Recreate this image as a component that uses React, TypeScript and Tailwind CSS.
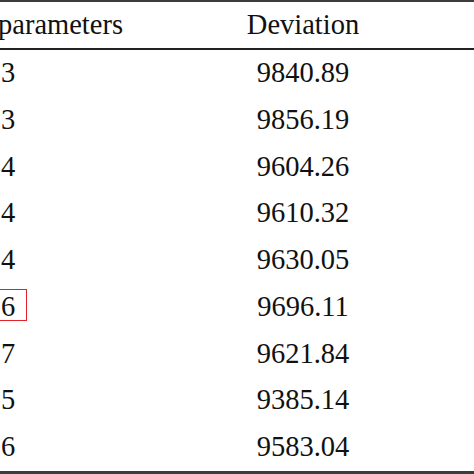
const rows = [
  { params: '3', deviation: '9840.89' },
  { params: '3', deviation: '9856.19' },
  { params: '4', deviation: '9604.26' },
  { params: '4', deviation: '9610.32' },
  { params: '4', deviation: '9630.05' },
  { params: '6', deviation: '9696.11', marked: true },
  { params: '7', deviation: '9621.84' },
  { params: '5', deviation: '9385.14' },
  { params: '6', deviation: '9583.04' },
];

export default function App() {
  return (
    <div
      className="w-[474px] h-[474px] bg-white text-[#111] overflow-hidden flex flex-col"
      style={{ fontFamily: '"Liberation Serif", "Times New Roman", serif' }}
    >
      {/* Top rule */}
      <div className="h-[2px] bg-[#3c3c3c]" />

      {/* Header */}
      <div className="grid grid-cols-[203px_200px_1fr] h-[46px] text-[28.5px] leading-[46px]">
        <div className="ml-[-2px] whitespace-nowrap">parameters</div>
        <div className="text-center">Deviation</div>
        <div />
      </div>
      <div className="h-[2px] bg-[#222]" />

      {/* Body */}
      <div className="flex flex-col text-[28.5px] leading-[46.75px]">
        {rows.map((row, i) => (
          <div key={i} className="grid grid-cols-[203px_200px_1fr] h-[46.75px]">
            <div className="relative ml-[1px]">
              {row.params}
              {row.marked && (
                <span className="absolute left-[-3px] top-[5px] w-[29px] h-[32px] border-[1.5px] border-[#e0242c]" />
              )}
            </div>
            <div className="text-center">{row.deviation}</div>
            <div />
          </div>
        ))}
      </div>

      {/* Bottom rule */}
      <div className="mt-auto h-[3px] bg-[#3c3c3c]" />
    </div>
  );
}
